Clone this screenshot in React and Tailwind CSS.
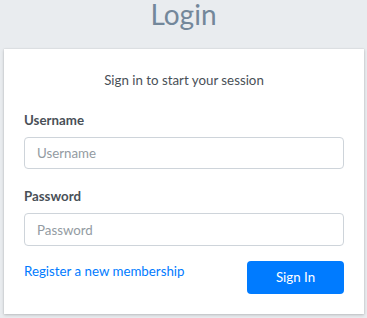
import React from 'react'

export default function App() {
  return (
    <div className="min-h-screen bg-[#e9ecef] px-1 font-['Lato',sans-serif]">
      <div className="h-[49px] text-center text-[28px] leading-[29px] text-[#73879a]">Login</div>

      <div className="w-[360px] bg-white px-5 pt-5 pb-5 shadow-[0_0_1px_rgba(0,0,0,0.13),0_1px_3px_rgba(0,0,0,0.2)]">
        <p className="mt-[1px] text-center text-[13.3px] leading-5 text-[#495057]">Sign in to start your session</p>

        <label className="mt-[20px] block text-[13.3px] font-bold leading-5 text-[#495057]">Username</label>
        <input
          type="text"
          placeholder="Username"
          className="mt-[7px] block h-[32px] w-full rounded border border-[#ced4da] px-3 text-[13.3px] text-[#495057] placeholder-[#939ba2] outline-none"
        />

        <label className="mt-[17px] block text-[13.3px] font-bold leading-5 text-[#495057]">Password</label>
        <input
          type="password"
          placeholder="Password"
          className="mt-[7px] block h-[33px] w-full rounded border border-[#ced4da] px-3 text-[13.3px] text-[#495057] placeholder-[#939ba2] outline-none"
        />

        <div className="mt-[15px] flex items-start justify-between">
          <a href="#register" className="mt-[0px] text-[13.3px] leading-5 text-[#007bff]">Register a new membership</a>
          <button className="h-[33px] w-[97px] rounded bg-[#007bff] text-[13.3px] text-white">Sign In</button>
        </div>
      </div>
    </div>
  )
}
